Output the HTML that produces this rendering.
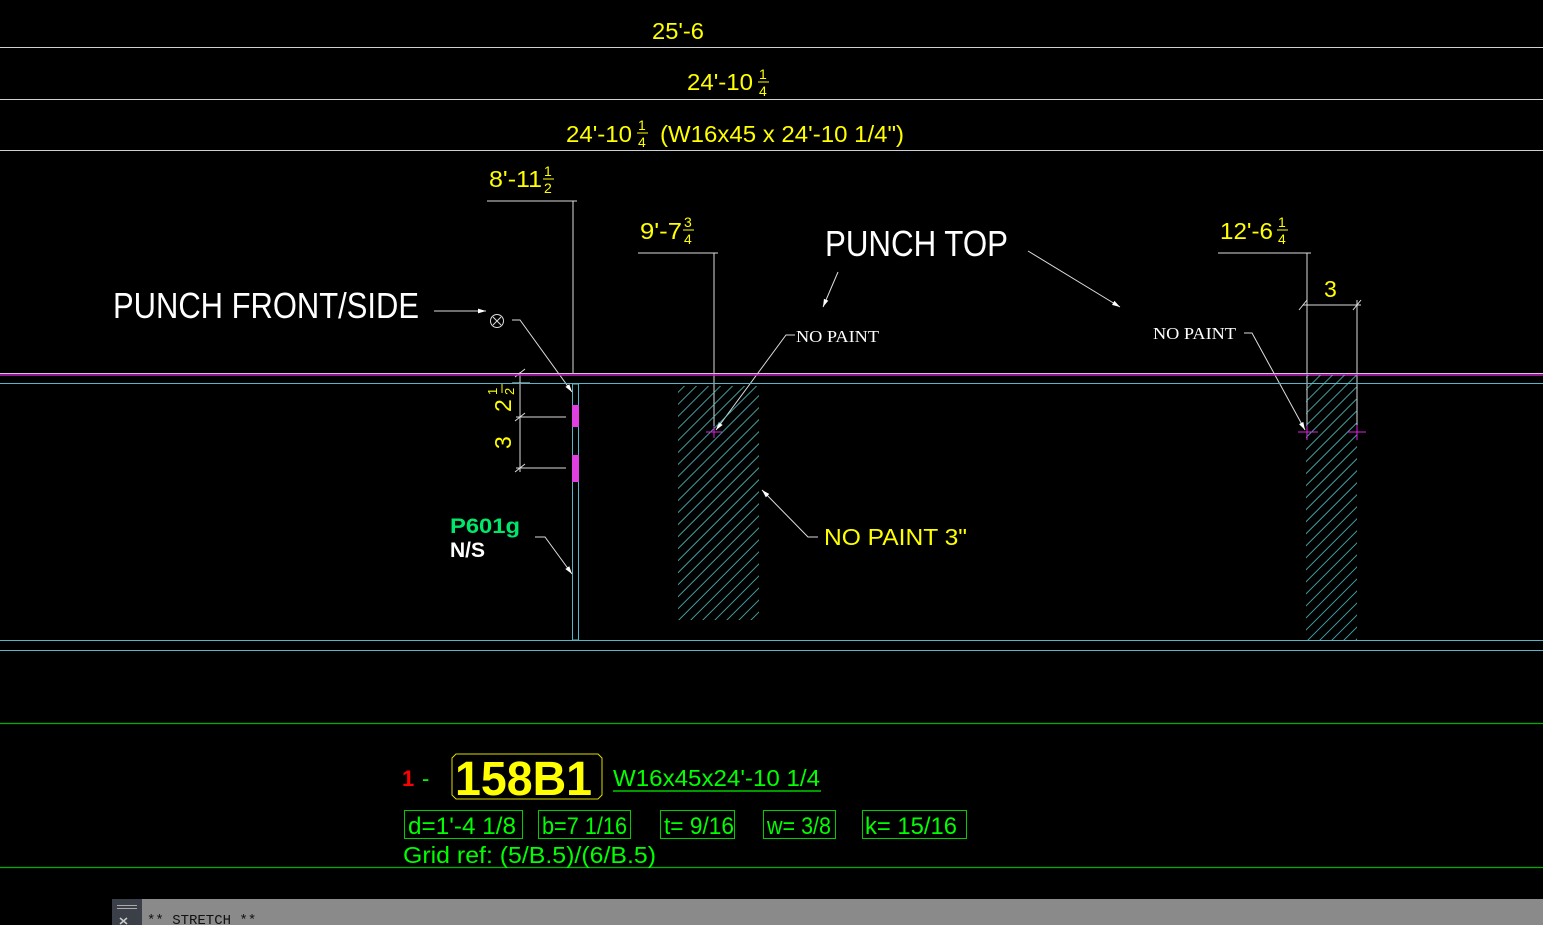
<!DOCTYPE html>
<html><head><style>
html,body{margin:0;padding:0;background:#000;overflow:hidden}
svg{display:block}
text{font-family:"Liberation Sans",sans-serif}
.serif{font-family:"Liberation Serif",serif}
</style></head><body>
<svg width="1543" height="925" viewBox="0 0 1543 925" xmlns="http://www.w3.org/2000/svg">
<defs>
<pattern id="h" patternUnits="userSpaceOnUse" width="8.5" height="8.5" patternTransform="rotate(45)">
<line x1="0" y1="0" x2="0" y2="8.5" stroke="#5ad0d0" stroke-width="1.5"/>
</pattern>
<marker id="a" viewBox="0 0 10 10" refX="10" refY="5" markerWidth="8" markerHeight="8" orient="auto-start-reverse"><path d="M0,2 L10,5 L0,8z" fill="#fff"/></marker>
</defs>
<rect width="1543" height="925" fill="#000"/>
<g stroke="#d0d0d0" stroke-width="1">
<line x1="0" y1="47.5" x2="1543" y2="47.5"/>
<line x1="0" y1="99.5" x2="1543" y2="99.5"/>
<line x1="0" y1="150.5" x2="1543" y2="150.5"/>
</g>
<g fill="#ffff00" font-size="23">
<text x="652" y="39" textLength="52" lengthAdjust="spacingAndGlyphs">25'-6</text>
<text x="687" y="90" textLength="66" lengthAdjust="spacingAndGlyphs">24'-10</text>
<text x="759" y="79" font-size="14">1</text><line x1="758" y1="82" x2="769" y2="82" stroke="#ff0"/><text x="759" y="96" font-size="14">4</text>
<text x="566" y="142" textLength="66" lengthAdjust="spacingAndGlyphs">24'-10</text>
<text x="638" y="130" font-size="14">1</text><line x1="637" y1="133" x2="648" y2="133" stroke="#ff0"/><text x="638" y="147" font-size="14">4</text>
<text x="660" y="142" textLength="244" lengthAdjust="spacingAndGlyphs">(W16x45 x 24'-10 1/4")</text>
<text x="489" y="187" textLength="53" lengthAdjust="spacingAndGlyphs">8'-11</text>
<text x="544" y="176" font-size="14">1</text><line x1="543" y1="179" x2="554" y2="179" stroke="#ff0"/><text x="544" y="193" font-size="14">2</text>
<text x="640" y="239" textLength="42" lengthAdjust="spacingAndGlyphs">9'-7</text>
<text x="684" y="227" font-size="14">3</text><line x1="683" y1="230" x2="694" y2="230" stroke="#ff0"/><text x="684" y="244" font-size="14">4</text>
<text x="1220" y="239" textLength="53" lengthAdjust="spacingAndGlyphs">12'-6</text>
<text x="1278" y="227" font-size="14">1</text><line x1="1277" y1="230" x2="1288" y2="230" stroke="#ff0"/><text x="1278" y="244" font-size="14">4</text>
<text x="1324" y="297">3</text>
<text x="824" y="545" textLength="143" lengthAdjust="spacingAndGlyphs">NO PAINT 3"</text>
<text transform="translate(511,449) rotate(-90)">3</text>
<text transform="translate(511,412) rotate(-90)">2</text>
<text transform="translate(497,395) rotate(-90)" font-size="13">1</text>
<text transform="translate(514,395) rotate(-90)" font-size="13">2</text>
</g>
<line x1="502" y1="384" x2="502" y2="393" stroke="#ff0"/>
<g fill="#fff" font-size="36">
<text x="113" y="318" textLength="306" lengthAdjust="spacingAndGlyphs">PUNCH FRONT/SIDE</text>
<text x="825" y="256" textLength="183" lengthAdjust="spacingAndGlyphs">PUNCH TOP</text>
<text class="serif" x="796" y="342" font-size="17" textLength="83" lengthAdjust="spacingAndGlyphs">NO PAINT</text>
<text class="serif" x="1153" y="339" font-size="17" textLength="83" lengthAdjust="spacingAndGlyphs">NO PAINT</text>
</g>
<g stroke="#ddd" stroke-width="1" fill="none">
<line x1="434" y1="311" x2="486" y2="311" marker-end="url(#a)"/>
<circle cx="497" cy="321" r="6.5"/>
<path d="M493,317 L501,325 M501,317 L493,325"/>
<path d="M512,320 L520,320 L572,392" marker-end="url(#a)"/>
<path d="M487,201 L577,201 M573,201 L573,374"/>
<path d="M638,253 L718,253 M714,253 L714,430"/>
<path d="M1218,253 L1311,253 M1307,253 L1307,432"/>
<path d="M1303,305 L1361,305 M1357,300 L1357,432"/>
<path d="M1299,310 L1307,300 M1353,310 L1361,300"/>
<path d="M838,272 L823,307" marker-end="url(#a)"/>
<path d="M1028,251 L1120,307" marker-end="url(#a)"/>
<path d="M795,335 L786,335 L716,430" marker-end="url(#a)"/>
<path d="M1244,333 L1252,333 L1305,430" marker-end="url(#a)"/>
<path d="M818,537 L808,537 L762,490" marker-end="url(#a)"/>
<path d="M535,537 L545,537 L572,574" marker-end="url(#a)"/>
<path d="M520,372 L520,472 M516,417 L566,417 M516,468 L566,468 M515,377 L525,369 M515,421 L525,413 M515,472 L525,464 M512,383 L530,383"/>
</g>
<line x1="0" y1="373.5" x2="1543" y2="373.5" stroke="#e0c0e0" stroke-width="1"/>
<line x1="0" y1="375" x2="1543" y2="375" stroke="#c020c0" stroke-width="1.5"/>
<g stroke="#5ab4c8" stroke-width="1">
<line x1="0" y1="383.5" x2="1543" y2="383.5"/>
<line x1="0" y1="640.5" x2="1543" y2="640.5"/>
<line x1="0" y1="650.5" x2="1543" y2="650.5"/>
<rect x="572.5" y="384" width="6" height="256" fill="none"/>
</g>
<rect x="572" y="405" width="7" height="22" fill="#e040e0"/>
<rect x="572" y="455" width="7" height="27" fill="#e040e0"/>
<rect x="678" y="386" width="81" height="234" fill="url(#h)"/>
<rect x="1306" y="375" width="51" height="265" fill="url(#h)"/>
<g stroke="#e020e0"><path d="M1298,432 L1318,432 M1307,425 L1307,440 M1348,432 L1366,432 M1357,425 L1357,440 M706,432 L722,432 M714,426 L714,438"/></g>
<text x="450" y="533" font-size="21" font-weight="bold" fill="#00e86c" textLength="70" lengthAdjust="spacingAndGlyphs">P601g</text>
<text x="450" y="557" font-size="21" font-weight="bold" fill="#fff">N/S</text>
<g stroke="#00b000" stroke-width="1.2">
<line x1="0" y1="723.5" x2="1543" y2="723.5"/>
<line x1="0" y1="867.5" x2="1543" y2="867.5"/>
</g>
<text x="402" y="786" font-size="22" fill="#f00" font-weight="bold">1</text>
<text x="422" y="786" font-size="22" fill="#0f0">-</text>
<path d="M456,754 L598,754 L602,758 L602,795 L598,799 L456,799 L452,795 L452,758z" fill="none" stroke="#dd0" stroke-width="1"/>
<text x="455" y="795" font-size="48" font-weight="bold" fill="#ff0" textLength="137" lengthAdjust="spacingAndGlyphs">158B1</text>
<text x="613" y="786" font-size="23" fill="#0f0" textLength="207" lengthAdjust="spacingAndGlyphs">W16x45x24'-10 1/4</text>
<line x1="613" y1="791" x2="821" y2="791" stroke="#0c0" stroke-width="1.5"/>
<g fill="none" stroke="#0c0" stroke-width="1">
<rect x="404.5" y="810.5" width="118" height="28"/>
<rect x="538.5" y="810.5" width="92" height="28"/>
<rect x="660.5" y="810.5" width="74" height="28"/>
<rect x="763.5" y="810.5" width="72" height="28"/>
<rect x="862.5" y="810.5" width="104" height="28"/>
</g>
<g fill="#0f0" font-size="24">
<text x="408" y="834" textLength="108" lengthAdjust="spacingAndGlyphs">d=1'-4 1/8</text>
<text x="542" y="834" textLength="85" lengthAdjust="spacingAndGlyphs">b=7 1/16</text>
<text x="664" y="834" textLength="70" lengthAdjust="spacingAndGlyphs">t= 9/16</text>
<text x="767" y="834" textLength="64" lengthAdjust="spacingAndGlyphs">w= 3/8</text>
<text x="865" y="834" textLength="92" lengthAdjust="spacingAndGlyphs">k= 15/16</text>
<text x="403" y="863" font-size="23" textLength="253" lengthAdjust="spacingAndGlyphs">Grid ref:  (5/B.5)/(6/B.5)</text>
</g>
<rect x="112" y="899" width="1431" height="26" fill="#8a8a8a"/>
<rect x="112" y="899" width="30" height="26" fill="#3a3f48"/>
<g fill="#aaa"><rect x="117" y="905" width="20" height="1"/><rect x="117" y="908" width="20" height="1"/></g>
<path d="M120,918 L127,924 M127,918 L120,924" stroke="#ccc" stroke-width="1.5"/>
<text x="147" y="924" font-size="14" fill="#111" style="font-family:'Liberation Mono',monospace">** STRETCH **</text>
</svg>
</body></html>
